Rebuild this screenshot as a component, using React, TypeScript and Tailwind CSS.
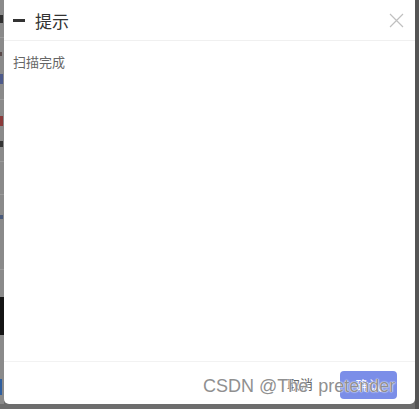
import React from 'react'

const font = { fontFamily: '"Noto Sans CJK SC", "Liberation Sans", sans-serif' }

function BackdropStrip() {
  // fragments of the page that peek out behind the overlay
  return (
    <div className="w-[4px] h-[404px] bg-[#8a8a8a] flex flex-col shrink-0">
      <div className="h-[15px]" />
      <div className="h-[8px] w-[3px] bg-[#2f2f2f]" />
      <div className="h-[14px]" />
      <div className="h-px bg-[#9a9a9a]" />
      <div className="h-[14px]" />
      <div className="h-[4px] w-[2px] bg-[#5a4a4a]" />
      <div className="h-[18px]" />
      <div className="h-[10px] w-[3px] bg-[#4d5a8a]" />
      <div className="h-[15px]" />
      <div className="h-px bg-[#9a9a9a]" />
      <div className="h-[16px]" />
      <div className="h-[10px] w-[3px] bg-[#8a3a3a]" />
      <div className="h-[15px]" />
      <div className="h-[6px] w-[3px] bg-[#333]" />
      <div className="h-[14px]" />
      <div className="h-px bg-[#9a9a9a]" />
      <div className="h-[32px]" />
      <div className="h-px bg-[#9a9a9a]" />
      <div className="h-[20px]" />
      <div className="h-[4px] w-[3px] bg-[#4a5a7a]" />
      <div className="h-[50px]" />
      <div className="h-px bg-[#9a9a9a]" />
      <div className="h-[27px]" />
      <div className="h-[38px] bg-[#141414]" />
      <div className="h-[44px]" />
      <div className="h-[16px] w-[2px] bg-[#2f5f9f]" />
    </div>
  )
}

function CloseIcon() {
  return (
    <svg width="15" height="15" viewBox="0 0 15 15" fill="none">
      <path d="M1 1L14 14M14 1L1 14" stroke="#c0c0c0" strokeWidth="1.2" />
    </svg>
  )
}

export default function App() {
  return (
    <div className="w-[419px] h-[409px] bg-[#6d6d6d] overflow-hidden" style={font}>
      <div className="flex">
        <BackdropStrip />
        <div className="w-[411px] h-[404px] bg-white rounded-b-[5px] flex flex-col shrink-0">
          {/* Header */}
          <div className="h-[41px] flex items-center border-b border-[#f0f0f0] pl-[9px] pr-[11px]">
            <div className="w-[12px] h-[3px] bg-[#333]" />
            <span className="ml-[10px] text-[17px] text-[#333] leading-none">提示</span>
            <div className="ml-auto flex items-center">
              <CloseIcon />
            </div>
          </div>

          {/* Body */}
          <div className="flex-1 px-[9px] pt-[13px]">
            <p className="text-[13px] text-[#666] leading-[16px]">扫描完成</p>
          </div>

          {/* Footer */}
          <div className="relative h-[43px] border-t border-[#f2f2f2] flex items-center justify-end pr-[18px]">
            <button className="text-[13px] text-[#666] mr-[27px] mt-[2px]">取消</button>
            <button className="w-[57px] h-[28px] mt-[3px] rounded-[4px] bg-[#7b8ee8] text-white text-[13px]">确认</button>
            <span
              className="absolute left-[199px] top-[15px] text-[18px] leading-none text-[#909090] whitespace-pre"
              style={{ fontFamily: '"Liberation Sans", Arial, sans-serif', textShadow: '0 0 2px #fff, 0 0 1px #fff' }}
            >
              CSDN @The  pretender
            </span>
          </div>
        </div>
        <div className="w-[4px] h-[409px] bg-[#555] shrink-0" />
      </div>
    </div>
  )
}
